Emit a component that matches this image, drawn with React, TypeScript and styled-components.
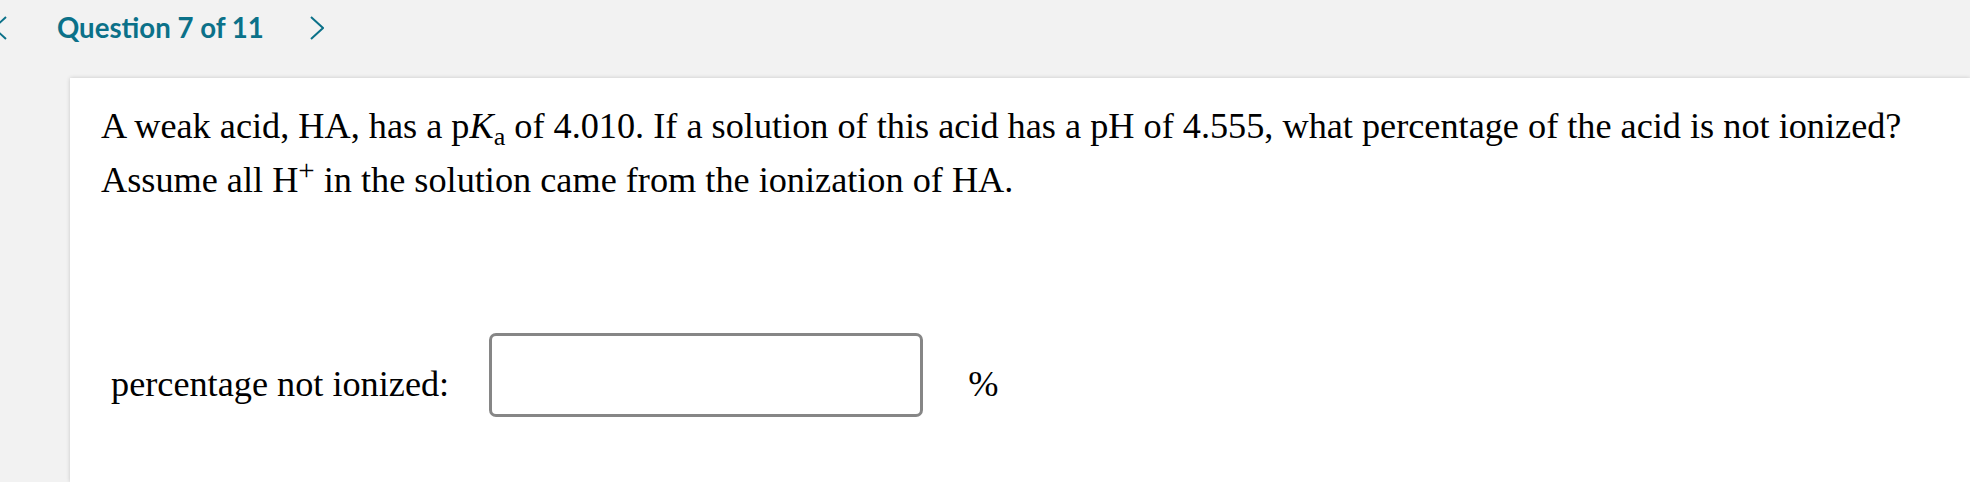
import styled, { createGlobalStyle } from 'styled-components';

const GlobalStyle = createGlobalStyle`
  html, body {
    margin: 0;
    padding: 0;
    background-color: #f2f2f2;
    overflow: hidden;
  }
`;

const Page = styled.div`
  width: 1970px;
  height: 482px;
  display: flex;
  flex-direction: column;
`;

// top bar with question pager
const Header = styled.header`
  height: 55px;
  display: flex;
  align-items: center;
  flex-shrink: 0;
`;

const NavButton = styled.button<{ $offset?: number }>`
  width: 14px;
  height: 24px;
  padding: 0;
  border: none;
  background: none;
  margin-left: ${(p) => p.$offset ?? 0}px;
  display: flex;
  color: #0b7189;
  cursor: pointer;
`;

const Title = styled.h1`
  margin: 0 0 0 50px;
  font-family: Lato, "Noto Sans", sans-serif;
  font-weight: 700;
  font-size: 27.6px;
  color: #0b7189;
`;

const Card = styled.main`
  flex: 1;
  margin: 23px 0 0 70px;
  padding: 21px 40px 0 31px;
  background-color: #ffffff;
  box-shadow: 0 0 4px rgba(0, 0, 0, 0.18);
  font-family: "Liberation Serif", "Times New Roman", serif;
  font-size: 36.25px;
  color: #000;
`;

const Prompt = styled.p`
  margin: 0;
  line-height: 54px;

  sub {
    font-size: 0.72em;
    line-height: 0;
    vertical-align: -0.28em;
  }

  sup {
    font-size: 0.8em;
    line-height: 0;
    vertical-align: 0.42em;
  }
`;

const AnswerRow = styled.div`
  margin-top: 126px;
  padding-left: 10px;
  display: flex;
  align-items: center;
`;

const Label = styled.label`
  padding-top: 18px;
`;

const AnswerInput = styled.input`
  box-sizing: border-box;
  width: 434px;
  height: 84px;
  margin-left: 40px;
  border: 3px solid #868686;
  border-radius: 7px;
  background: #fff;
  font: inherit;
  outline: none;
`;

const Unit = styled.span`
  margin-left: 45px;
  padding-top: 18px;
`;

const Chevron = ({ dir }: { dir: 'left' | 'right' }) => (
  <svg width="14" height="24" viewBox="0 0 14 24" fill="none">
    <path
      d={dir === 'right' ? 'M1 1 L13 12 L1 23' : 'M13 1 L1 12 L13 23'}
      stroke="currentColor"
      strokeWidth="2"
    />
  </svg>
);

export default function App() {
  return (
    <>
      <GlobalStyle />
      <Page>
        <Header>
          <NavButton $offset={-7} aria-label="previous">
            <Chevron dir="left" />
          </NavButton>
          <Title>Question 7 of 11</Title>
          <NavButton $offset={46} aria-label="next">
            <Chevron dir="right" />
          </NavButton>
        </Header>

        <Card>
          <Prompt>
            A weak acid, HA, has a p<i>K</i>
            <sub>a</sub> of 4.010. If a solution of this acid has a pH of 4.555, what percentage of
            the acid is not ionized?
            <br />
            Assume all H<sup>+</sup> in the solution came from the ionization of HA.
          </Prompt>

          <AnswerRow>
            <Label htmlFor="answer">percentage not ionized:</Label>
            <AnswerInput id="answer" type="text" />
            <Unit>%</Unit>
          </AnswerRow>
        </Card>
      </Page>
    </>
  );
}
